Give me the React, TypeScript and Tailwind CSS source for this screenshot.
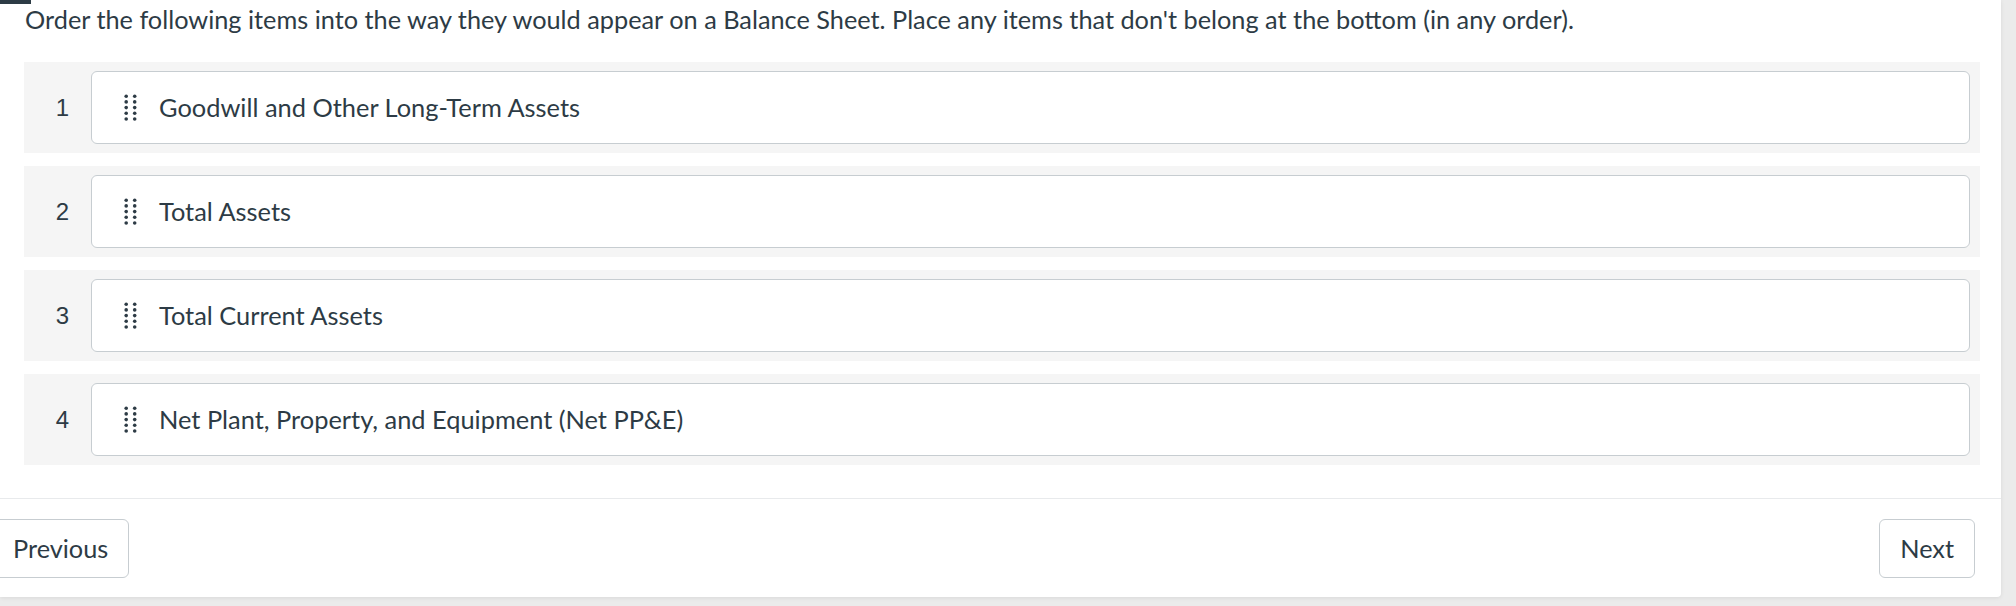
const ITEMS = [
  'Goodwill and Other Long-Term Assets',
  'Total Assets',
  'Total Current Assets',
  'Net Plant, Property, and Equipment (Net PP&E)',
];

function DragHandle() {
  const dots = [0, 1, 2, 3, 4];
  return (
    <svg width="13" height="27" viewBox="0 0 13 27" className="shrink-0 text-[#2d3b45]">
      {dots.map((i) => (
        <g key={i} fill="currentColor">
          <circle cx="2.2" cy={2.2 + i * 5.7} r="1.8" />
          <circle cx="10.7" cy={2.2 + i * 5.7} r="1.8" />
        </g>
      ))}
    </svg>
  );
}

export default function App() {
  return (
    <div className="w-[2016px] h-[606px] bg-[#ebebeb] overflow-hidden" style={{ fontFamily: 'Lato, "Noto Sans", sans-serif' }}>
      <div className="w-[2001px] h-[597px] bg-white rounded-br-[4px] shadow-[0_1px_4px_rgba(0,0,0,0.08)] flex flex-col text-[#2d3b45]">
        <div className="w-[31px] h-[4px] bg-[#2d3b45]" />

        <p className="pl-[25px] text-[25.3px] leading-[34px] -mt-[2px]">
          Order the following items into the way they would appear on a Balance Sheet. Place any items that don't belong at the bottom (in any order).
        </p>

        <ol className="ml-[24px] w-[1956px] mt-[26px] flex flex-col gap-[13px]">
          {ITEMS.map((item, idx) => (
            <li key={item} className="h-[91px] bg-[#f5f5f5] flex items-center pr-[10px]">
              <span
                className="w-[67px] pl-[10px] text-center text-[24px]"
                style={{ fontFamily: '"Liberation Sans", Arial, sans-serif' }}
              >
                {idx + 1}
              </span>
              <div className="flex-1 h-[73px] bg-white border border-[#c7cdd1] rounded-[6px] flex items-center pl-[32px] gap-[22px]">
                <DragHandle />
                <span className="text-[25.4px]">{item}</span>
              </div>
            </li>
          ))}
        </ol>

        <div className="mt-[33px] border-t border-[#e8eaec]" />

        <div className="flex justify-between items-center pt-[20px] pr-[26px]">
          <button className="-ml-[8px] h-[59px] px-[20px] bg-white border border-[#c7cdd1] rounded-[6px] text-[25.3px] text-[#2d3b45]">
            Previous
          </button>
          <button className="h-[59px] px-[20px] bg-white border border-[#c7cdd1] rounded-[6px] text-[25.3px] text-[#2d3b45]">
            Next
          </button>
        </div>
      </div>
    </div>
  );
}
